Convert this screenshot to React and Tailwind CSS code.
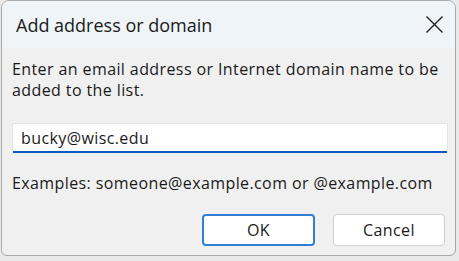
const App = () => {
  return (
    <div
      className="w-[459px] h-[261px] bg-[#e9e9e9] overflow-hidden"
      style={{ fontFamily: '"Open Sans", "Noto Sans", sans-serif' }}
    >
      <div className="w-[455px] h-[256px] ml-px rounded-t-[8px] rounded-b-[6px] border border-[#a8a8a8] bg-[#f0f0f0] flex flex-col overflow-hidden">
        {/* Title bar */}
        <div className="h-[47px] shrink-0 bg-[#eef4f8] flex items-center justify-between pl-[14px] pr-[12px]">
          <span className="text-[18px] text-[#1a1a1a] mt-[1px]">Add address or domain</span>
          <svg width="17" height="17" viewBox="0 0 17 17" className="text-[#222]">
            <path d="M0.5 0.5 L16.5 16.5 M16.5 0.5 L0.5 16.5" stroke="currentColor" strokeWidth="1.4" fill="none" />
          </svg>
        </div>

        {/* Body */}
        <div className="flex-1 flex flex-col px-[10px] pt-[11px] text-[16px] text-[#1a1a1a] tracking-[0.4px]">
          <p className="leading-[21px]">
            Enter an email address or Internet domain name to be added to the list.
          </p>

          <div className="mt-[22px] h-[30px] w-[436px] bg-white border border-[#e3e3e3] border-b-0 flex flex-col">
            <div className="flex-1 flex items-center pl-[8px]">bucky@wisc.edu</div>
            <div className="h-[2px] bg-[#0a5bc4]" />
          </div>

          <p className="mt-[20px] leading-[20px]">
            Examples: someone@example.com or @example.com
          </p>

          <div className="mt-[21px] flex justify-end gap-[18px]">
            <button className="w-[113px] h-[32px] rounded-[4px] bg-white border-2 border-[#2f7fd6] text-[16px] tracking-[0.4px] text-[#1a1a1a]">
              OK
            </button>
            <button className="w-[112px] h-[32px] rounded-[4px] bg-white border border-[#d0d0d0] text-[16px] tracking-[0.4px] text-[#1a1a1a]">
              Cancel
            </button>
          </div>
        </div>
      </div>
    </div>
  );
};

export default App;
